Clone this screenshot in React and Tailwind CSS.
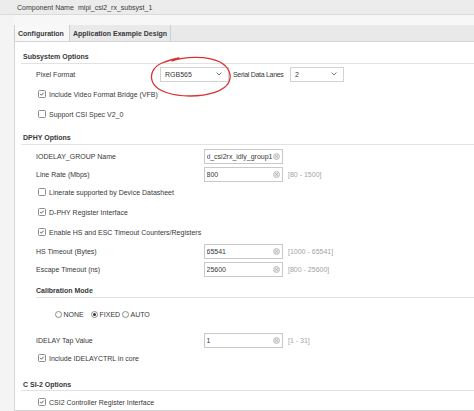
import React from "react";

function Check({ checked }) {
  return (
    <span className="w-[8px] h-[8px] shrink-0 border border-[#8c8c8c] rounded-[1.5px] bg-white flex items-center justify-center">
      {checked && (
        <svg width="8" height="8" viewBox="0 0 8 8" className="block">
          <path d="M1.6 4.1 L3.2 5.6 L6.3 2.2" fill="none" stroke="#333" strokeWidth="1.1" />
        </svg>
      )}
    </span>
  );
}

function CheckRow({ checked, label, mt = "" }) {
  return (
    <div className={`h-[20px] flex items-center pl-[17px] gap-[3px] ${mt}`}>
      <Check checked={checked} />
      <span className="whitespace-nowrap">{label}</span>
    </div>
  );
}

function ClearIcon() {
  return (
    <svg width="7" height="7" viewBox="0 0 7 7" className="block shrink-0">
      <circle cx="3.5" cy="3.5" r="3" fill="#e9e9e9" stroke="#b3b3b3" strokeWidth="0.8" />
      <path d="M2.3 2.3 L4.7 4.7 M4.7 2.3 L2.3 4.7" stroke="#a0a0a0" strokeWidth="0.8" />
    </svg>
  );
}

function Field({ label, value, range, mt = "", clipLeft = false }) {
  return (
    <div className={`h-[16px] flex items-center ${mt}`}>
      <span className="pl-[15px] w-[183px] shrink-0 whitespace-nowrap">{label}</span>
      <div className="w-[79px] h-[15px] shrink-0 border border-[#c9c9c9] bg-white flex items-center pl-[1.5px] pr-[2.5px]">
        <div className={`flex-1 min-w-0 overflow-hidden whitespace-nowrap flex leading-[11px] ${clipLeft ? "justify-end" : ""}`}>
          <span className="whitespace-nowrap">{value}</span>
        </div>
        <ClearIcon />
      </div>
      {range && <span className="ml-[5px] text-[#a3a3a3] whitespace-nowrap">{range}</span>}
    </div>
  );
}

function Chevron() {
  return (
    <svg width="6" height="4" viewBox="0 0 6 4" className="block shrink-0">
      <polyline points="0.6,0.6 3,3 5.4,0.6" fill="none" stroke="#666" strokeWidth="0.9" />
    </svg>
  );
}

function Select({ value, w }) {
  return (
    <div className={`${w} h-[15px] shrink-0 border border-[#d2d2d2] bg-white flex items-center justify-between pl-[4px] pr-[6px]`}>
      <span>{value}</span>
      <Chevron />
    </div>
  );
}

function Heading({ children, mt = "", extra = "" }) {
  return (
    <div className={`h-[14px] flex items-center pl-[2px] border-b border-[#e2e2e2] font-bold ${mt} ${extra}`}>
      {children}
    </div>
  );
}

function Radio({ checked, label, w }) {
  return (
    <span className={`${w} flex items-center gap-[1.5px]`}>
      <span className="w-[7px] h-[7px] shrink-0 rounded-full border border-[#8c8c8c] bg-white flex items-center justify-center">
        {checked && <span className="w-[3px] h-[3px] rounded-full bg-[#333]" />}
      </span>
      <span>{label}</span>
    </span>
  );
}

export default function App() {
  return (
    <div className="relative w-[474px] h-[411px] overflow-hidden bg-white text-[7px] leading-none text-[#383838] font-['Liberation_Sans',Arial,sans-serif]">
      {/* Component name bar */}
      <div className="h-[15px] bg-[#ececec] border-b border-[#dadada] flex items-center">
        <span className="pl-[17px] w-[78px] shrink-0 whitespace-nowrap">Component Name</span>
        <span className="whitespace-nowrap">mipi_csi2_rx_subsyst_1</span>
      </div>

      <div className="flex h-[396px]">
        <div className="w-[14px] shrink-0 bg-[#f4f4f4]" />
        <div className="flex-1 flex flex-col min-w-0">
          <div className="h-[10px] bg-[#f7f7f7]" />
          {/* Tabs */}
          <div className="h-[17px] bg-[#e9e9e9] border-b border-[#d4d4d4] flex">
            <div className="w-[56px] bg-[#f8f8f8] border-x border-[#cfcfcf] flex items-center pl-[3px] font-bold">
              Configuration
            </div>
            <div className="w-[101px] border-r border-[#cfcfcf] flex items-center pl-[3px] font-bold whitespace-nowrap">
              Application Example Design
            </div>
          </div>

          {/* Panel */}
          <div className="flex-1 bg-white border-l border-[#d4d4d4] border-b overflow-hidden pt-[8px] pl-[6px]">
            <Heading>Subsystem Options</Heading>
            <div className="h-[16px] mt-[2px] flex items-center">
              <span className="pl-[15px] w-[139px] shrink-0">Pixel Format</span>
              <Select value="RGB565" w="w-[69px]" />
              <span className="ml-[4px] w-[57px] shrink-0 whitespace-nowrap tracking-[-0.3px]">Serial Data Lanes</span>
              <Select value="2" w="w-[54px]" />
            </div>
            <CheckRow checked label="Include Video Format Bridge (VFB)" mt="mt-[2px]" />
            <CheckRow label="Support CSI Spec V2_0" />

            <Heading mt="mt-[7px]">DPHY Options</Heading>
            <Field label="IODELAY_GROUP Name" value="xi_csi2rx_idly_group1" mt="mt-[3px]" clipLeft />
            <Field label="Line Rate (Mbps)" value="800" range="[80 - 1500]" mt="mt-[2px]" />
            <CheckRow label="Linerate supported by Device Datasheet" />
            <CheckRow checked label="D-PHY Register Interface" />
            <CheckRow checked label="Enable HS and ESC Timeout Counters/Registers" />
            <Field label="HS Timeout (Bytes)" value="65541" range="[1000 - 65541]" mt="mt-[1px]" />
            <Field label="Escape Timeout (ns)" value="25600" range="[800 - 25600]" mt="mt-[2px]" />

            <div className="ml-[15px]">
              <div className="h-[15px] mt-[6px] flex items-center border-b border-[#e2e2e2] font-bold">
                Calibration Mode
              </div>
              <div className="h-[20px] mt-[6px] flex items-center pl-[19px]">
                <Radio label="NONE" w="w-[36px]" />
                <Radio checked label="FIXED" w="w-[31px]" />
                <Radio label="AUTO" w="w-[36px]" />
              </div>
            </div>
            <Field label="IDELAY Tap Value" value="1" range="[1 - 31]" mt="mt-[8px]" />
            <CheckRow checked label="Include IDELAYCTRL in core" />

            <div className="h-[13px] mt-[10px] flex items-center pl-[2px] border-b border-[#e2e2e2] font-bold">
              C SI-2 Options
            </div>
            <CheckRow checked label="CSI2 Controller Register Interface" mt="mt-[1px]" />
          </div>
        </div>
      </div>

      {/* Red hand-drawn circle annotation */}
      <svg className="absolute inset-0 pointer-events-none" width="474" height="411" viewBox="0 0 474 411">
        <path
          d="M172 61 C185 56, 208 56, 220 62 C229 67, 232 75, 229 82 C225 91, 208 96, 190 96 C172 96, 157 91, 153 83 C149 75, 153 67, 162 63 C167 61, 172 59, 179 58"
          fill="none"
          stroke="#d83232"
          strokeWidth="1.3"
          strokeLinecap="round"
        />
      </svg>
    </div>
  );
}
